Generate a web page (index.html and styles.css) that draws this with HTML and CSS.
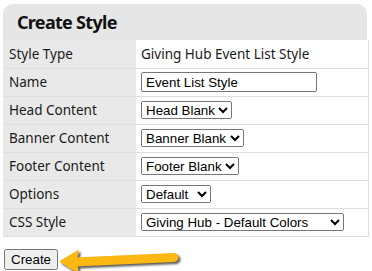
FILE: index.html
```html
<html>
<head>
    <link rel="stylesheet" href="styles.css">
</head>
<body>
    <div class="panel">
        <div class="panel-head">Create Style</div>
        <table class="form-table">
            <tr>
                <td class="label">Style Type</td>
                <td class="value">Giving Hub Event List Style</td>
            </tr>
            <tr>
                <td class="label">Name</td>
                <td class="value"><input type="text" class="text-input" value="Event List Style"></td>
            </tr>
            <tr>
                <td class="label">Head Content</td>
                <td class="value"><select class="pick"><option>Head Blank</option></select></td>
            </tr>
            <tr>
                <td class="label">Banner Content</td>
                <td class="value"><select class="pick"><option>Banner Blank</option></select></td>
            </tr>
            <tr>
                <td class="label">Footer Content</td>
                <td class="value"><select class="pick"><option>Footer Blank</option></select></td>
            </tr>
            <tr>
                <td class="label">Options</td>
                <td class="value"><select class="pick pick-options"><option>Default</option></select></td>
            </tr>
            <tr>
                <td class="label">CSS Style</td>
                <td class="value"><select class="pick pick-css"><option>Giving Hub - Default Colors</option></select></td>
            </tr>
        </table>
    </div>

    <div class="actions">
        <button class="create-btn">Create</button>
        <!-- pointer arrow -->
        <svg class="arrow" width="124" height="25" viewBox="0 0 124 25">
            <line x1="16" y1="13" x2="115" y2="8.5" stroke="#fbb813" stroke-width="9" stroke-linecap="round"/>
            <path d="M1.5,12.5 L19,2 L17,12.5 L19,23 Z" fill="#fbb813" stroke="#fbb813" stroke-width="1.5" stroke-linejoin="round"/>
        </svg>
    </div>
</body>
</html>
```

FILE: styles.css
```css
body {
    font-family: "Noto Sans", "Open Sans", sans-serif;
    color: #1a1a1a;
    background-color: #fff;
    margin: 4px 3px;
}
.panel {
    width: 366px;
}
.panel-head {
    background-color: #e6e6e6;
    border-radius: 10px 10px 0 0;
    height: 36px;
    line-height: 36px;
    padding-left: 14px;
    font-size: 18px;
    font-weight: bold;
    letter-spacing: -0.7px;
    color: #111;
    margin-right: 2px;
}
.form-table {
    width: 100%;
    border-collapse: collapse;
    border-right: 1px solid #dedede;
}
.form-table td {
    border-bottom: 1px solid #dedede;
    height: 28px;
    padding: 0;
    font-size: 13.5px;
}
.label {
    width: 127px;
    background-color: #e9e9e9;
    padding-left: 6px !important;
}
.value {
    background-color: #fff;
    padding-left: 5px !important;
}
.text-input {
    width: 176px;
    height: 20px;
    font-family: "Liberation Sans", Arial, sans-serif;
    font-size: 13.33px;
    padding: 1px 4px;
    border: 1px solid #767676;
    border-radius: 2px;
    box-sizing: border-box;
    display: block;
}
.pick {
    font-family: "Liberation Sans", Arial, sans-serif;
    font-size: 13.33px;
    color: #000;
    height: 18px;
    display: block;
}
.pick-options {
    width: 70px;
}
.pick-css {
    width: 203px;
}
.actions {
    display: flex;
    align-items: flex-start;
    margin-top: 12px;
    margin-left: 1px;
}
.create-btn {
    font-family: "Liberation Sans", Arial, sans-serif;
    font-size: 13.33px;
    height: 21px;
    padding: 1px 5px;
}
.arrow {
    margin-left: 1px;
    filter: drop-shadow(2px 2px 1px rgba(0, 0, 0, 0.65));
}
```
